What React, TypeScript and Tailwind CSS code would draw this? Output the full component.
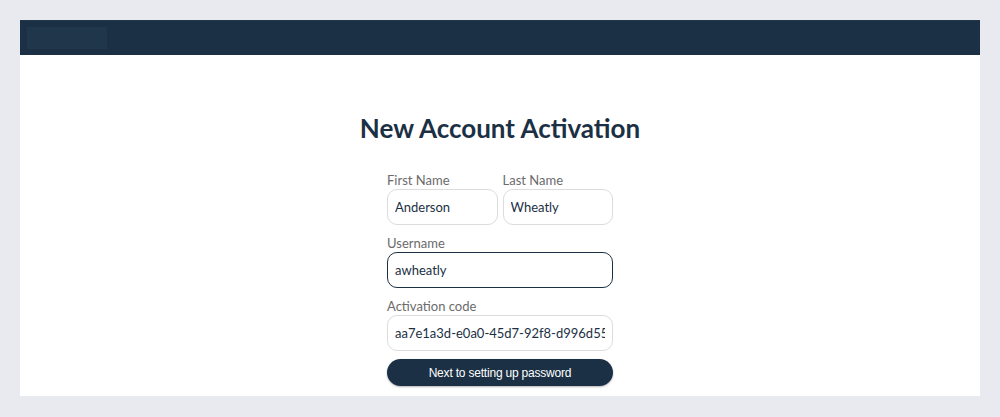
import {useState} from "react";

function Field({
  label,
  value,
  active,
}: {
  label: string;
  value: string;
  active?: boolean;
}) {
  const [val, setVal] = useState(value);
  return (
    <label className="flex flex-col min-w-0 flex-1">
      <span className="h-4 leading-4 text-[13px] text-[#6b6b6b] mb-[1px]">
        {label}
      </span>
      <input
        value={val}
        autoFocus={active}
        onChange={(e) => setVal(e.target.value)}
        className={
          active
            ? "h-[36px] w-full rounded-[10px] border-[1.5px] border-[#1b3044] bg-white px-[7px] text-[13px] text-[#1b3044] outline-none caret-[#1b3044]"
            : "h-[36px] w-full rounded-[10px] border border-[#dcdcdc] bg-white px-[7px] text-[13px] text-[#1b3044] outline-none"
        }
        style={{fontFamily: "Lato, sans-serif"}}
      />
    </label>
  );
}

export default function App() {
  return (
    <div className="min-h-[417px] bg-[#e9eaef] p-5 font-['Lato',sans-serif]">
      <div className="h-[376px] bg-white flex flex-col">
        <header className="h-[35px] bg-[#1b3044] flex items-center px-[7px] border-t border-[#25384a]">
          <div className="w-20 h-[22px] bg-[#20364a]" />
        </header>
        <main className="flex flex-col items-center pt-[57px]">
          <h1 className="text-[26px] leading-8 font-bold text-[#1b3044]">
            New Account Activation
          </h1>
          <form
            className="w-[226px] mt-[28px] flex flex-col gap-[10px]"
            onSubmit={(e) => e.preventDefault()}
          >
            <div className="flex gap-[5px]">
              <Field label="First Name" value="Anderson" />
              <Field label="Last Name" value="Wheatly" />
            </div>
            <Field label="Username" value="awheatly" active />
            <Field
              label="Activation code"
              value="aa7e1a3d-e0a0-45d7-92f8-d996d5527419"
            />
            <button
              type="submit"
              className="mt-[-2px] h-[27px] w-full rounded-full bg-[#1b3044] text-white text-[12px] tracking-[-0.2px] font-['Liberation_Sans',Arial,sans-serif] shadow-[0_1px_2px_rgba(0,0,0,0.3)]"
            >
              Next to setting up password
            </button>
          </form>
        </main>
      </div>
    </div>
  );
}
